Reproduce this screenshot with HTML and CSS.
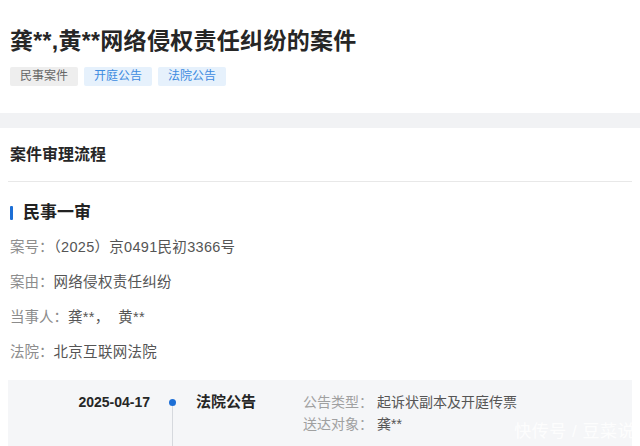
FILE: index.html
```html
<!DOCTYPE html>
<html lang="zh">
<head>
<meta charset="utf-8">
<link rel="stylesheet" href="styles.css">
</head>
<body>
<div class="page">
  <header class="head">
    <h1 class="title">龚**,黄**网络侵权责任纠纷的案件</h1>
    <div class="tags">
      <span class="tag tag-gray">民事案件</span>
      <span class="tag tag-blue">开庭公告</span>
      <span class="tag tag-blue">法院公告</span>
    </div>
  </header>
  <div class="band"></div>
  <section class="card">
    <h2 class="card-title">案件审理流程</h2>
    <div class="stage">
      <h3 class="stage-title"><span class="bar"></span>民事一审</h3>
      <div class="info">
        <p class="row"><span class="lab">案号：</span><span class="val">（2025）京0491民初3366号</span></p>
        <p class="row"><span class="lab">案由：</span><span class="val">网络侵权责任纠纷</span></p>
        <p class="row"><span class="lab">当事人：</span><span class="val">龚**，&nbsp;&nbsp;黄**</span></p>
        <p class="row"><span class="lab">法院：</span><span class="val">北京互联网法院</span></p>
      </div>
      <div class="timeline">
        <div class="t-date">2025-04-17</div>
        <div class="t-axis"><span class="dot"></span><span class="line"></span></div>
        <div class="t-name">法院公告</div>
        <div class="t-detail">
          <p class="d-row"><span class="lab">公告类型：</span><span class="val">起诉状副本及开庭传票</span></p>
          <p class="d-row"><span class="lab">送达对象：</span><span class="val">龚**</span></p>
        </div>
      </div>
    </div>
  </section>
  <div class="watermark">快传号 / 豆菜说</div>
</div>
</body>
</html>
```
FILE: styles.css
```css
* { box-sizing: border-box; margin: 0; padding: 0; }
html, body { background: #ffffff; }
body {
  width: 640px;
  height: 446px;
  overflow: hidden;
  font-family: "Liberation Sans", "Noto Sans CJK SC", sans-serif;
  color: #333;
}
.page { position: relative; width: 640px; height: 446px; overflow: hidden; }
.head { padding: 26px 10px 0 10px; height: 113px; }
.title {
  font-size: 23px;
  line-height: 30px;
  font-weight: 700;
  color: #262626;
  letter-spacing: 0.3px;
}
.tags { display: flex; gap: 6px; margin-top: 11px; }
.tag {
  font-size: 12px;
  line-height: 19px;
  height: 19px;
  padding: 0 10px;
  border-radius: 2px;
}
.tag-gray { background: #eeeeee; color: #666; }
.tag-blue { background: #e6f1fc; color: #3d8be0; }
.band { height: 15px; background: #f1f2f4; }
.card { padding: 0 8px; }
.card-title {
  font-size: 16px;
  font-weight: 700;
  color: #262626;
  line-height: 20px;
  padding: 17px 2px 16px;
  border-bottom: 1px solid #e8e8e8;
}
.stage { padding-top: 20px; }
.stage-title {
  display: flex;
  align-items: center;
  gap: 10px;
  font-size: 17px;
  font-weight: 700;
  line-height: 22px;
  color: #222;
  padding-left: 2px;
}
.bar { width: 3px; height: 14px; background: #1d6fd6; border-radius: 1px; }
.info { padding: 13px 2px 0; display: flex; flex-direction: column; gap: 15px; }
.row { font-size: 14.5px; line-height: 20px; }
.lab { color: #8c8c8c; }
.val { color: #555; letter-spacing: 0.3px; }
.timeline {
  margin-top: 18px;
  background: #f5f6f8;
  height: 80px;
  display: flex;
  align-items: flex-start;
  padding-top: 12px;
}
.t-date {
  width: 142px;
  text-align: right;
  font-size: 14px;
  font-weight: 700;
  color: #262626;
  line-height: 20px;
}
.t-axis {
  width: 44px;
  display: flex;
  flex-direction: column;
  align-items: center;
  padding-top: 7px;
  align-self: stretch;
}
.dot { width: 7px; height: 7px; border-radius: 50%; background: #1d6fd6; }
.line { width: 1px; flex: 1; background: #d6d9de; }
.t-name {
  width: 109px;
  font-size: 15px;
  font-weight: 700;
  color: #262626;
  line-height: 20px;
  padding-left: 2px;
}
.t-detail { display: flex; flex-direction: column; gap: 2px; }
.d-row { font-size: 14px; line-height: 20px; }
.d-row .lab { color: #a0a0a0; margin-right: 4px; }
.d-row .val { color: #555; letter-spacing: 0; }
.watermark {
  position: absolute;
  right: 5px;
  bottom: 4px;
  font-size: 17px;
  color: rgba(255, 255, 255, 0.85);
  letter-spacing: 0.5px;
}
```
